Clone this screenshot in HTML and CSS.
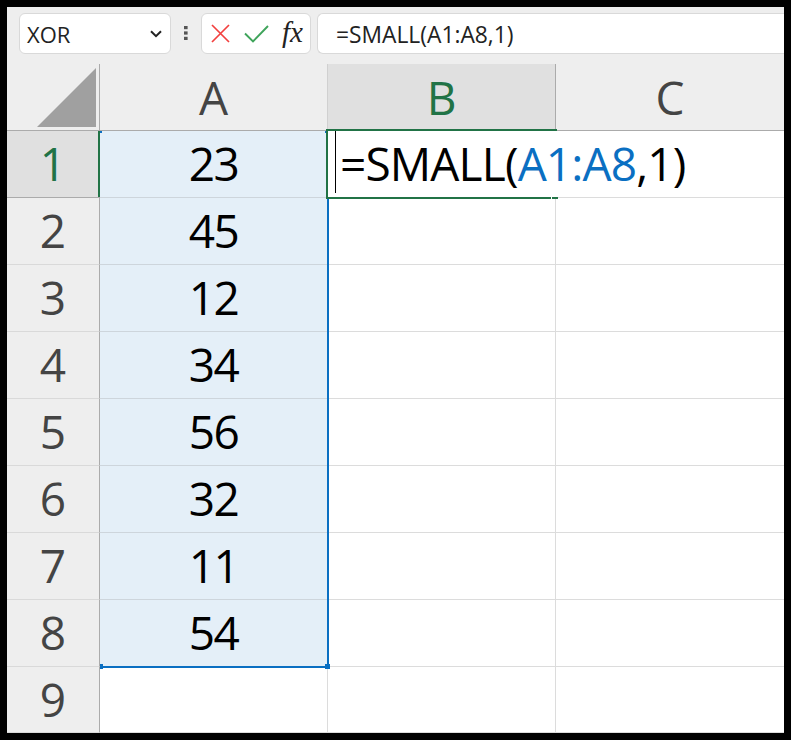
FILE: index.html
```html
<!DOCTYPE html>
<html lang="en">
<head>
<meta charset="utf-8">
<title>SMALL formula</title>
<link rel="stylesheet" href="styles.css">
</head>
<body>
<div class="app">
  <div class="bar">
    <div class="namebox">
      <span>XOR</span>
      <svg class="chev" width="12" height="8" viewBox="0 0 12 8"><path d="M1 1.2L6 6.2l5-5" fill="none" stroke="#222" stroke-width="2"/></svg>
    </div>
    <svg class="dots" width="6" height="16" viewBox="0 0 6 16"><rect x="1" y="1" width="3.6" height="3.2" fill="#555"/><rect x="1" y="6.4" width="3.6" height="3.2" fill="#555"/><rect x="1" y="11.8" width="3.6" height="3.2" fill="#555"/></svg>
    <div class="fxbox">
      <svg class="x-icon" width="19" height="19" viewBox="0 0 19 19"><path d="M1 1L18 18M18 1L1 18" stroke="#f2403f" stroke-width="1.7" fill="none"/></svg>
      <svg class="ok-icon" width="25" height="18" viewBox="0 0 25 18"><path d="M1 8.5L9 16.5L24 1" stroke="#3fa45b" stroke-width="1.9" fill="none"/></svg>
      <span class="fx">fx</span>
    </div>
    <div class="formula">=SMALL(A1:A8,1)</div>
  </div>
  <div class="sheet">
    <div class="corner"><svg width="59" height="59" viewBox="0 0 59 59"><path d="M59 0V59H0Z" fill="#a0a0a0"/></svg></div>
    <div class="colhead">A</div>
    <div class="colhead active-col">B</div>
    <div class="colhead last">C</div>

    <div class="rowhead active-row">1</div><div class="cell sel">23</div><div class="cell"></div><div class="cell last"></div>
    <div class="rowhead">2</div><div class="cell sel">45</div><div class="cell"></div><div class="cell last"></div>
    <div class="rowhead">3</div><div class="cell sel">12</div><div class="cell"></div><div class="cell last"></div>
    <div class="rowhead">4</div><div class="cell sel">34</div><div class="cell"></div><div class="cell last"></div>
    <div class="rowhead">5</div><div class="cell sel">56</div><div class="cell"></div><div class="cell last"></div>
    <div class="rowhead">6</div><div class="cell sel">32</div><div class="cell"></div><div class="cell last"></div>
    <div class="rowhead">7</div><div class="cell sel">11</div><div class="cell"></div><div class="cell last"></div>
    <div class="rowhead">8</div><div class="cell sel">54</div><div class="cell"></div><div class="cell last"></div>
    <div class="rowhead">9</div><div class="cell"></div><div class="cell"></div><div class="cell last"></div>

    <div class="range"></div>
    <div class="handle h-tl"></div>
    <div class="handle h-tr"></div>
    <div class="handle h-bl"></div>
    <div class="handle h-br"></div>
    <div class="rowmark"></div>
    <div class="editor"><span class="caret"></span><span>=SMALL(</span><span class="ref">A1:A8</span><span>,1)</span></div>
    <div class="handle-green"></div>
  </div>
</div>
</body>
</html>
```

FILE: styles.css
```css
* { box-sizing: border-box; }
html, body { margin: 0; height: 100%; background: #000; }
body { padding: 7px; font-family: "Open Sans", "Noto Sans", sans-serif; overflow: hidden; }
.app { width: 777px; height: 726px; display: flex; flex-direction: column; background: #eeeeee; overflow: hidden; }

.bar { height: 57px; flex: none; display: flex; align-items: flex-start; padding: 6px 0 0 12px; }
.namebox, .fxbox, .formula { height: 41px; background: #fff; border: 1px solid #d9d9d9; border-radius: 6px; display: flex; align-items: center; }
.namebox { width: 152px; padding: 0 8px 0 7px; justify-content: space-between; font-size: 22px; color: #222; }
.chev { margin-top: 1px; }
.dots { margin: 12px 12px 0 12px; }
.fxbox { width: 110px; padding: 0 0 0 9px; }
.x-icon { margin-right: 14px; }
.fx { font-family: "Liberation Serif", serif; font-style: italic; font-size: 29px; color: #222; margin-left: 13px; line-height: 30px; margin-top: -3px; }
.formula { flex: 1; margin-left: 6px; padding: 2px 0 0 18px; border-right: 0; border-radius: 6px 0 0 6px; font-size: 22.8px; color: #222; }

.sheet { position: relative; flex: 1; display: grid; grid-template-columns: 93px 228px 228px 228px; grid-template-rows: 67px repeat(8, 67px) 1fr; background: #fff; }
.corner { background: #eeeeee; border-right: 1px solid #ababab; border-bottom: 1px solid #ababab; display: flex; justify-content: flex-end; align-items: flex-end; padding: 0 3px 3px 0; }
.colhead { background: #eeeeee; border-right: 1px solid #d0d0d0; border-bottom: 1px solid #ababab; font-size: 46px; color: #444; text-align: center; line-height: 66px; }
.colhead.active-col { background: #e0e0e0; color: #217346; border-right-color: #ababab; }
.colhead.last { border-right: 0; }
.rowhead { background: #eeeeee; border-right: 1px solid #ababab; border-bottom: 1px solid #d9d9d9; font-size: 46px; color: #444; text-align: center; line-height: 65px; }
.rowhead.active-row { background: #e0e0e0; color: #217346; border-bottom-color: #ababab; }
.cell { background: #fff; border-right: 1px solid #dcdcdc; border-bottom: 1px solid #dcdcdc; font-size: 46px; color: #000; text-align: center; line-height: 65px; letter-spacing: -1.6px; }
.cell.sel { background: #e4eff8; border-bottom-color: #cdd5dc; border-right-color: #cdd5dc; }
.cell.last { border-right: 0; }

.range { position: absolute; left: 93px; top: 67px; width: 229px; height: 537px; border-right: 2px solid #0a6fc2; border-bottom: 2px solid #0a6fc2; }
.handle { position: absolute; background: #0a6fc2; }
.h-tl { left: 92px; top: 67px; width: 3px; height: 2px; }
.h-tr { left: 318px; top: 67px; width: 3px; height: 2px; }
.h-bl { left: 93px; top: 600px; width: 3px; height: 5px; }
.h-br { left: 318px; top: 600px; width: 5px; height: 5px; }
.rowmark { position: absolute; left: 91px; top: 67px; width: 2px; height: 66px; background: #217346; }
.editor { position: absolute; left: 319px; top: 65px; width: 231px; height: 70px; border: 2px solid #217346; border-right: 0; background: #fff; display: flex; font-size: 46px; line-height: 65px; letter-spacing: -0.85px; color: #000; white-space: nowrap; padding-left: 12px; }
.editor span { flex: none; }
.editor .caret { position: absolute; left: 7px; top: 0; width: 1px; height: 62px; background: #000; }
.ref { color: #0a6fc2; }
.handle-green { position: absolute; left: 545px; top: 133px; width: 6px; height: 2px; background: #217346; box-shadow: -1px 0 0 #fff; }
```
